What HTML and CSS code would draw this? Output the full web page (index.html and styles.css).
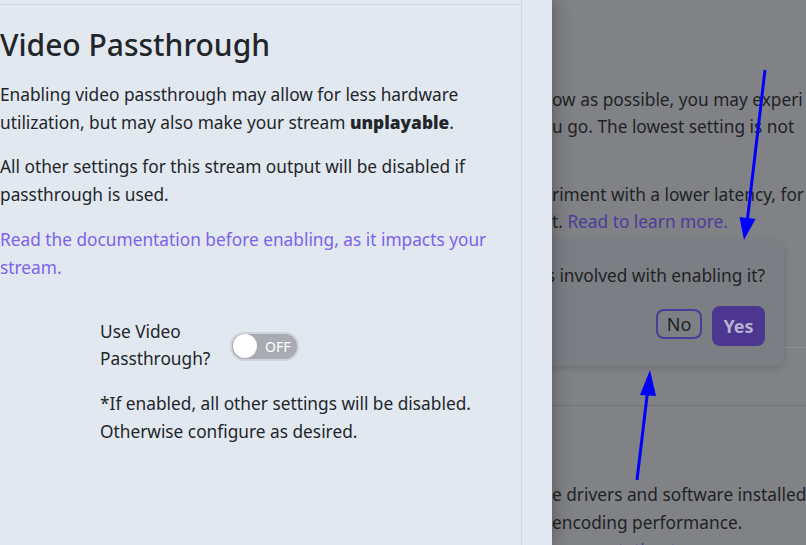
FILE: index.html
```html
<!DOCTYPE html>
<html>
<head>
<meta charset="utf-8">
<link rel="stylesheet" href="styles.css">
</head>
<body>
<div class="page">
  <aside class="drawer">
    <div class="drawer-inner">
      <div class="topbar"></div>
      <h1 class="title">Video Passthrough</h1>
      <p class="text text-first">Enabling video passthrough may allow for less hardware utilization, but may also make your stream <strong>unplayable</strong>.</p>
      <p class="text">All other settings for this stream output will be disabled if passthrough is used.</p>
      <p class="text link">Read the documentation before enabling, as it impacts your stream.</p>
      <div class="setting">
        <div class="setting-row">
          <span class="setting-label">Use Video Passthrough?</span>
          <span class="toggle"><span class="knob"></span><span class="toggle-text">OFF</span></span>
        </div>
        <p class="note">*If enabled, all other settings will be disabled. Otherwise configure as desired.</p>
      </div>
    </div>
  </aside>
  <main class="backdrop">
    <div class="bg-content">
      <p class="bg-text l1">ow as possible, you may experi<br>u go. The lowest setting is not</p>
      <p class="bg-text l2">riment with a lower latency, for<br>t. <span class="bg-link">Read to learn more.</span></p>
      <div class="bg-section"></div>
      <p class="bg-text l3">e drivers and software installed<br>encoding performance.<br><span class="bg-link">ocumentation to ensure your</span></p>
    </div>
    <div class="confirm">
      <p class="confirm-text">s involved with enabling it?</p>
      <div class="confirm-actions">
        <button class="btn btn-no">No</button>
        <button class="btn btn-yes">Yes</button>
      </div>
    </div>
  </main>
  <svg class="arrows" width="806" height="545" viewBox="0 0 806 545">
    <line x1="765" y1="70" x2="747.5" y2="219" stroke="#0000ff" stroke-width="3"/>
    <polygon points="739.5,217 755.5,219 744,240" fill="#0000ff"/>
    <line x1="637" y1="480" x2="647.5" y2="392" stroke="#0000ff" stroke-width="3"/>
    <polygon points="640,395 656,396 650,370" fill="#0000ff"/>
  </svg>
</div>
</body>
</html>
```
FILE: styles.css
```css
html, body {
  margin: 0;
  padding: 0;
}
body {
  width: 806px;
  height: 545px;
  overflow: hidden;
  font-family: "Noto Sans", "Open Sans", sans-serif;
  background: #808285;
}
.page {
  position: relative;
  display: flex;
  width: 806px;
  height: 545px;
}
.drawer {
  width: 552px;
  flex: none;
  background: #e2e8f0;
  position: relative;
  z-index: 2;
  box-shadow: 0 0 18px rgba(0, 0, 0, 0.35);
}
.drawer-inner {
  width: 521px;
  height: 545px;
  border-right: 1px solid #d3d9e1;
  box-sizing: content-box;
}
.topbar {
  height: 4px;
  border-bottom: 1px solid #d3d9e1;
}
.title {
  margin: 21px 0 17px;
  font-size: 30px;
  font-weight: 500;
  color: #22262b;
  line-height: 38px;
}
.text {
  margin: 0 0 17px;
  font-size: 17.3px;
  line-height: 28px;
  color: #22262b;
}
.text-first {
  margin-bottom: 16px;
}
.text strong {
  font-weight: 900;
}
.link {
  color: #7b62ea;
}
.setting {
  margin: 36px 0 0 100px;
}
.setting-row {
  display: flex;
  align-items: center;
  gap: 17px;
}
.setting-label {
  width: 113px;
  font-size: 17.3px;
  line-height: 27px;
  color: #22262b;
}
.toggle {
  display: flex;
  align-items: center;
  width: 65px;
  height: 25px;
  border-radius: 14px;
  background: #a8abb1;
  border: 2px solid #cfd4dc;
  box-sizing: content-box;
  margin-top: 2px;
}
.knob {
  width: 24px;
  height: 24px;
  border-radius: 50%;
  background: #ffffff;
  margin-left: 1px;
  flex: none;
}
.toggle-text {
  margin-left: 8px;
  font-size: 14px;
  color: #ffffff;
}
.note {
  margin: 18px 0 0;
  width: 390px;
  font-size: 17.3px;
  line-height: 28px;
  color: #22262b;
}
.backdrop {
  flex: 1;
  position: relative;
  overflow: hidden;
  background: #808285;
}
.bg-content {
  padding-top: 87px;
}
.bg-text {
  margin: 0;
  font-size: 17.3px;
  line-height: 26.5px;
  color: #1f2226;
  white-space: nowrap;
}
.bg-text.l2 {
  margin-top: 42px;
}
.bg-link {
  color: #4b3c9a;
}
.bg-section {
  margin-top: 112px;
  height: 57px;
  border-top: 1px solid #8b8d91;
  border-bottom: 1px solid #727479;
}
.bg-text.l3 {
  margin-top: 75px;
  line-height: 28px;
}
.confirm {
  position: absolute;
  top: 240px;
  left: -20px;
  right: 22px;
  height: 126px;
  background: #7b7e83;
  border-radius: 10px;
  box-shadow: 0 2px 6px rgba(0, 0, 0, 0.15);
  padding: 22px 19px 0 0;
  box-sizing: border-box;
  text-align: right;
}
.confirm-text {
  margin: 0;
  font-size: 17.3px;
  line-height: 28px;
  color: #1f2226;
  white-space: nowrap;
}
.confirm-actions {
  margin-top: 16px;
  display: flex;
  justify-content: flex-end;
  align-items: flex-start;
  gap: 10px;
}
.btn {
  font-family: "Noto Sans", sans-serif;
  font-size: 18px;
  border-radius: 8px;
  padding: 0;
  cursor: pointer;
}
.btn-no {
  margin-top: 3px;
  width: 46px;
  height: 30px;
  background: #7d8085;
  border: 2px solid #4b3c9a;
  color: #1f2226;
  line-height: 24px;
}
.btn-yes {
  width: 53px;
  height: 40px;
  background: #4b3690;
  border: none;
  color: #b8b2cf;
  font-weight: 700;
}
.arrows {
  position: absolute;
  left: 0;
  top: 0;
  z-index: 5;
  pointer-events: none;
}
```
